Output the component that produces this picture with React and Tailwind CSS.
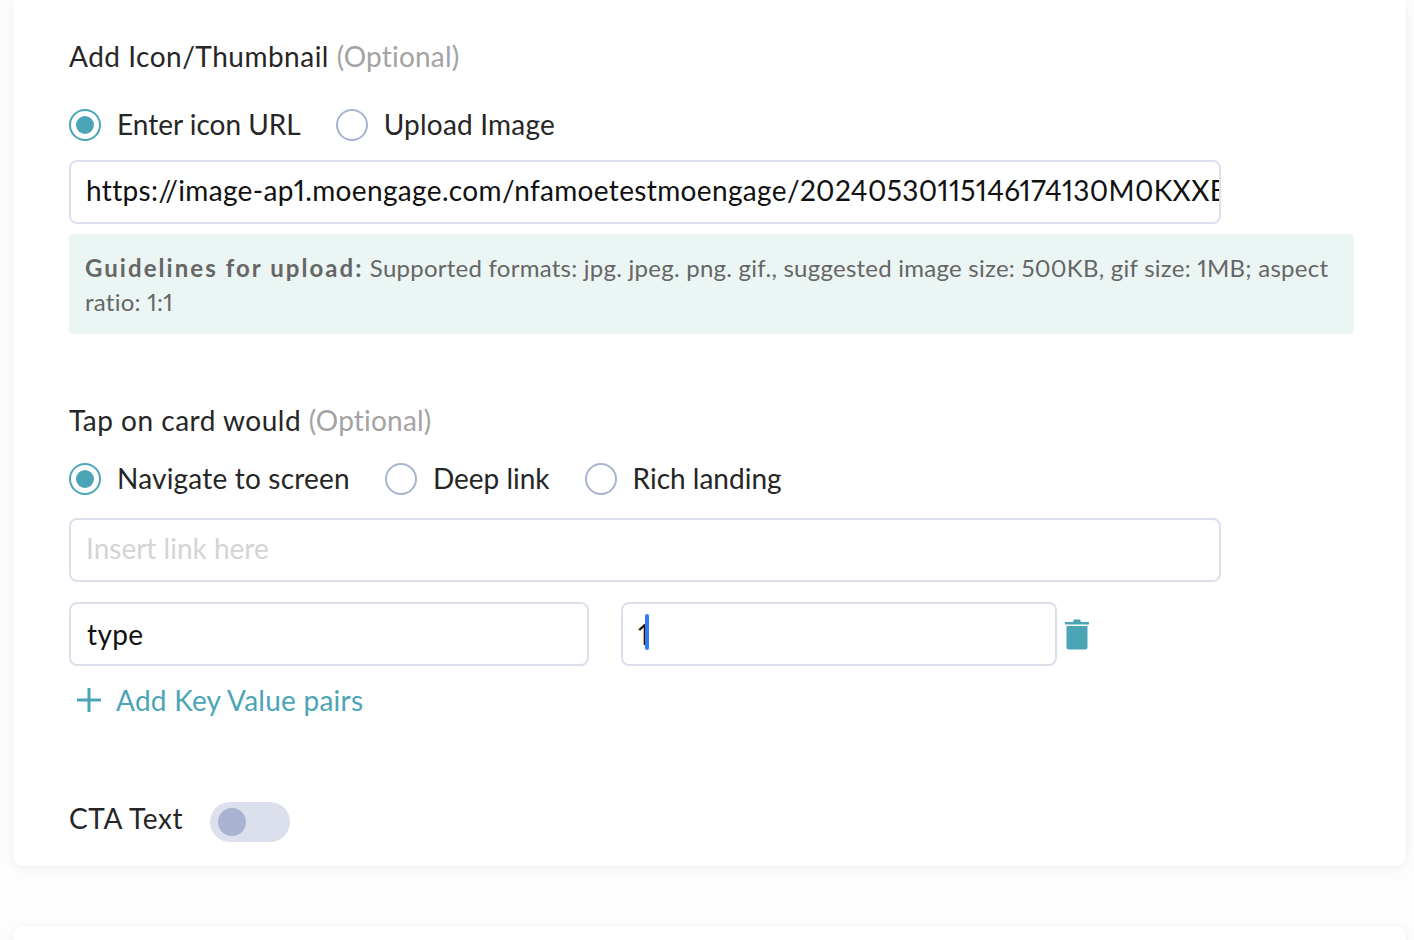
import React from 'react'

function Radio({ label, checked, tight }) {
  return (
    <label className="flex items-center gap-[16px]">
      <span className={`flex h-[32px] w-[32px] items-center justify-center rounded-full border-2 bg-white ${checked ? 'border-[#4ba5b7]' : 'border-[#a7b3d1]'}`}>
        {checked && <span className="h-[18px] w-[18px] rounded-full bg-[#4ba5b7]" />}
      </span>
      <span className={`mb-[2px] text-[28px] leading-[30px] text-[#262626] ${tight ? 'tracking-[0px]' : 'tracking-[0.2px]'}`}>{label}</span>
    </label>
  )
}

function TextBox({ value, placeholder, className }) {
  return (
    <input
      readOnly
      value={value}
      placeholder={placeholder}
      className={`h-[64px] rounded-[8px] border-2 border-[#dce0ec] bg-white pl-[15px] text-[28px] tracking-[0.35px] text-[#111] proportional-nums placeholder:tracking-[0px] placeholder:text-[#d4d4d4] focus:outline-none ${className}`}
    />
  )
}

export default function App() {
  return (
    <div className="h-[940px] overflow-hidden bg-[#fdfdfd] font-['Lato',sans-serif]">
      <section className="ml-[13px] mr-[8px] h-[866px] rounded-b-[10px] bg-white pl-[56px] pr-[52px] shadow-[0_2px_10px_rgba(0,0,0,0.07)]">
        <h3 className="pt-[39px] text-[28px] leading-[34px] tracking-[0.5px] text-[#262626]">
          Add Icon/Thumbnail <span className="tracking-[0.2px] text-[#a3a3a3]">(Optional)</span>
        </h3>

        <div className="mt-[36px] flex gap-[35px]">
          <Radio label="Enter icon URL" checked tight />
          <Radio label="Upload Image" />
        </div>

        <TextBox
          className="mt-[19px] block w-[1152px] pb-[5px]"
          value="https://image-ap1.moengage.com/nfamoetestmoengage/20240530115146174130M0KXXBTESTICON.png"
        />

        <div className="mt-[10px] h-[100px] rounded-[4px] bg-[#ebf5f3] px-[16px] pt-[17px] text-[24px] leading-[34px] tracking-[0.25px] text-[#666] proportional-nums">
          <b className="font-bold tracking-[2.05px]">Guidelines for upload:</b> Supported formats: jpg. jpeg. png. gif., suggested image size: 500KB, gif size: 1MB; aspect ratio: 1:1
        </div>

        <h3 className="mt-[69px] text-[28px] leading-[34px] tracking-[0.5px] text-[#262626]">
          Tap on card would <span className="tracking-[0.2px] text-[#a3a3a3]">(Optional)</span>
        </h3>

        <div className="mt-[26px] flex gap-[35px]">
          <Radio label="Navigate to screen" checked />
          <Radio label="Deep link" tight />
          <Radio label="Rich landing" tight />
        </div>

        <TextBox className="mt-[23px] block w-[1152px] pb-[5px]" placeholder="Insert link here" value="" />

        <div className="mt-[20px] flex items-center">
          <TextBox className="w-[520px] !pl-[16px]" value="type" />
          <div className="relative ml-[32px]">
            <TextBox className="block w-[436px]" value="1" />
            <span className="absolute left-[24px] top-[12px] h-[36px] w-[4px] rounded-full bg-[#2f7bf6]" />
          </div>
          <svg className="ml-[7px]" width="26" height="32" viewBox="0 0 26 32">
            <path fill="#4ba5b7" d="M1 4h8l1-2.500h6l1 2.500h8v2.500H1zM2.500 8h21v21a2.500 2.500 0 0 1-2.500 2.500H5A2.500 2.500 0 0 1 2.500 29z" />
          </svg>
        </div>

        <button className="mt-[17px] flex items-center text-[28px] leading-[34px] tracking-[0.25px] text-[#4ba5b7]">
          <svg className="ml-[8px] mr-[15px]" width="24" height="24" viewBox="0 0 24 24">
            <path fill="#4ba5b7" d="M10.500 0h3v10.500H24v3H13.500V24h-3V13.500H0v-3h10.500z" />
          </svg>
          Add Key Value pairs
        </button>

        <div className="mt-[84px] flex items-center">
          <span className="mb-[8px] text-[28px] leading-[34px] tracking-[0.6px] text-[#262626]">CTA Text</span>
          <span className="ml-[27px] flex h-[40px] w-[80px] items-center rounded-full bg-[#dce0ec] pl-[8px]">
            <span className="h-[28px] w-[28px] rounded-full bg-[#a7b3d1]" />
          </span>
        </div>
      </section>

      <section className="ml-[13px] mr-[8px] mt-[60px] h-[40px] rounded-t-[10px] bg-white shadow-[0_2px_10px_rgba(0,0,0,0.07)]" />
    </div>
  )
}
